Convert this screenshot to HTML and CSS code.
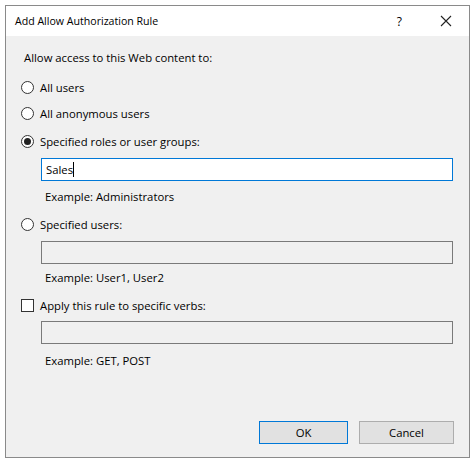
FILE: index.html
```html
<!DOCTYPE html>
<html>
<head>
<meta charset="utf-8">
<link rel="stylesheet" href="styles.css">
</head>
<body>
<div class="dialog">
  <div class="titlebar">
    <span class="title">Add Allow Authorization Rule</span>
    <span class="help">?</span>
    <svg class="close" width="12" height="12" viewBox="0 0 12 12"><path d="M1 1 L11 11 M11 1 L1 11" stroke="#222" stroke-width="1.1" fill="none"/></svg>
  </div>
  <div class="content">
    <div class="row heading">Allow access to this Web content to:</div>
    <div class="row option o1"><span class="radio"></span>All users</div>
    <div class="row option o2"><span class="radio"></span>All anonymous users</div>
    <div class="row option o3"><span class="radio checked"></span>Specified roles or user groups:</div>
    <div class="field active f1">Sales<span class="caret"></span></div>
    <div class="row example e1">Example: Administrators</div>
    <div class="row option o4"><span class="radio"></span>Specified users:</div>
    <div class="field f2"></div>
    <div class="row example e2">Example: User1, User2</div>
    <div class="row option o5"><span class="checkbox"></span>Apply this rule to specific verbs:</div>
    <div class="field f3"></div>
    <div class="row example e3">Example: GET, POST</div>
    <div class="buttons">
      <button class="btn btn-ok">OK</button>
      <button class="btn btn-cancel">Cancel</button>
    </div>
  </div>
</div>
</body>
</html>
```
FILE: styles.css
```css
html, body {
  margin: 0;
  padding: 0;
  background: #ffffff;
}
body {
  font-family: "Open Sans", "Noto Sans", sans-serif;
  font-size: 11.3px;
  color: #000;
}
.dialog {
  margin: 5px 0 0 5px;
  width: 463px;
  height: 451px;
  border: 1px solid #8a8a8a;
  display: flex;
  flex-direction: column;
}
.titlebar {
  height: 30px;
  background: #ffffff;
  display: flex;
  align-items: center;
  flex: none;
}
.title {
  margin-left: 9px;
  flex: 1;
  font-size: 10.6px;
}
.help {
  font-size: 12px;
  margin-right: 38px;
}
.close {
  margin-right: 17px;
}
.content {
  flex: 1;
  background: #f0f0f0;
  display: flex;
  flex-direction: column;
  padding: 11px 0 13px 0;
}
.row {
  height: 20px;
  display: flex;
  align-items: center;
  white-space: nowrap;
}
.heading { padding-left: 18px; }
.option { padding-left: 15px; }
.o1 { margin-top: 10px; }
.o2 { margin-top: 6px; }
.o3 { margin-top: 8px; }
.e1 { margin-top: 5px; }
.o4 { margin-top: 8px; }
.e2 { margin-top: 3px; }
.o5 { margin-top: 8px; }
.e3 { margin-top: 6px; }
.example { padding-left: 39px; }
.radio {
  width: 11px;
  height: 11px;
  border: 1px solid #333;
  border-radius: 50%;
  margin-right: 6px;
  background: #fff;
  display: flex;
  align-items: center;
  justify-content: center;
  flex: none;
}
.radio.checked::after {
  content: "";
  width: 7px;
  height: 7px;
  border-radius: 50%;
  background: #222;
}
.checkbox {
  width: 11px;
  height: 11px;
  border: 1px solid #333;
  background: #fff;
  margin-right: 6px;
  flex: none;
}
.field {
  margin-left: 35px;
  width: 408px;
  height: 21px;
  border: 1px solid #7a7a7a;
  background: #f0f0f0;
  display: flex;
  align-items: center;
  padding-left: 2px;
  box-sizing: content-box;
}
.field.active {
  border-color: #0078d7;
  background: #ffffff;
  width: 406px;
  padding-left: 4px;
}
.f1 { margin-top: 7px; }
.f2 { margin-top: 7px; }
.f3 { margin-top: 6px; }
.caret {
  display: inline-block;
  width: 1px;
  height: 15px;
  background: #000;
}
.buttons {
  margin-top: auto;
  display: flex;
  justify-content: flex-end;
  gap: 11px;
  padding-right: 15px;
}
.btn {
  height: 23px;
  font-family: "Open Sans", "Noto Sans", sans-serif;
  font-size: 11.3px;
  color: #000;
  background: #e1e1e1;
  border: 1px solid #adadad;
  padding: 0;
  margin: 0;
}
.btn-ok {
  width: 89px;
  border-color: #0078d7;
}
.btn-cancel {
  width: 95px;
}
```
